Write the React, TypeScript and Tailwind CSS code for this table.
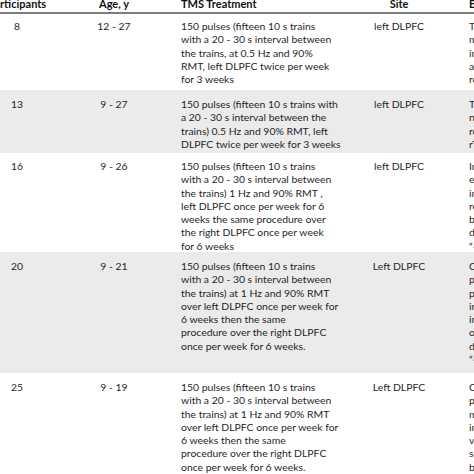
import React from 'react';

type Row = {
  n: string;
  age: string;
  tms: string[];
  site: string;
  effect: string[];
  shaded?: boolean;
  h: string;
  pt: string;
};

const rows: Row[] = [
  {
    n: '8',
    age: '12 - 27',
    tms: [
      '150 pulses (fifteen 10 s trains',
      'with a 20 - 30 s interval between',
      'the trains, at 0.5 Hz and 90%',
      'RMT, left DLPFC twice per week',
      'for 3 weeks',
    ],
    site: 'left DLPFC',
    effect: ['The YGTSS scores were', 'modestly reduced and', 'improvement was', 'associated with', 'reduced symptoms'],
    h: 'h-[76px]',
    pt: 'pt-[6px]',
  },
  {
    n: '13',
    age: '9 - 27',
    tms: [
      '150 pulses (fifteen 10 s trains with',
      'a 20 - 30 s interval between the',
      'trains) 0.5 Hz and 90%  RMT, left',
      'DLPFC twice per week for 3 weeks',
    ],
    site: 'left DLPFC',
    effect: ['The YGTSS scores were', 'not significantly', 'reduced after the', 'rTMS sessions'],
    shaded: true,
    h: 'h-[63px]',
    pt: 'pt-[8px]',
  },
  {
    n: '16',
    age: '9 - 26',
    tms: [
      '150 pulses (fifteen 10 s trains',
      'with a 20 - 30 s interval between',
      'the trains) 1 Hz and 90%  RMT ,',
      'left DLPFC once per week for 6',
      'weeks the same procedure over',
      'the right DLPFC once per week',
      'for 6 weeks',
    ],
    site: 'left DLPFC',
    effect: ['Improvement in tic', 'expression and', 'impulsivity was', 'reported; effects', 'became evident', 'during follow-up', '“~ 6 months”'],
    h: 'h-[99px]',
    pt: 'pt-[7px]',
  },
  {
    n: '20',
    age: '9 - 21',
    tms: [
      '150 pulses (fifteen 10 s trains',
      'with a 20 - 30 s interval between',
      'the trains) at 1 Hz and 90%  RMT',
      'over left DLPFC once per week for',
      '6 weeks then the same',
      'procedure over the right DLPFC',
      'once per week for 6 weeks.',
    ],
    site: 'Left DLPFC',
    effect: ['Clinical improvement in', 'patients with tics;', 'partial response', 'in obsessive', 'impulsive symptoms', 'observed after', 'discontinuation', '“~ 3 months”'],
    shaded: true,
    h: 'h-[121px]',
    pt: 'pt-[8px]',
  },
  {
    n: '25',
    age: '9 - 19',
    tms: [
      '150 pulses (fifteen 10 s trains',
      'with a 20 - 30 s interval between',
      'the trains) at 1 Hz and 90%  RMT',
      'over left DLPFC once per week for',
      '6 weeks then the same',
      'procedure over the right DLPFC',
      'once per week for 6 weeks.',
    ],
    site: 'Left DLPFC',
    effect: ['Clinical improvement in', 'patients; YGTSS', 'motor and vocal', 'improvement was', 'visible after the', 'sessions and', 'benefits were kept'],
    h: 'h-[120px]',
    pt: 'pt-[8px]',
  },
];

const cols = 'grid grid-cols-[80px_114px_169px_118px_200px]';

export default function App() {
  return (
    <div className="w-[474px] h-[474px] overflow-hidden bg-white text-[#1f1f1f] text-[10.4px] leading-[13.3px] font-['Lato',sans-serif]">
      <div className="ml-[-23px] w-[681px]">
        {/* Header */}
        <div className={`${cols} h-[16px] items-end pb-[4px] border-b-2 border-[#7d7d7d] font-bold text-[#111] text-[11px] leading-[12px] -mt-[2px]`}>
          <div className="text-center">Participants</div>
          <div className="text-center">Age, y</div>
          <div className="pl-[10px]">TMS Treatment</div>
          <div className="text-center">Site</div>
          <div className="pl-[11px]">Effects</div>
        </div>

        {rows.map((r) => (
          <div key={r.n} className={`${cols} ${r.h} ${r.pt} ${r.shaded ? 'bg-[#ebebeb]' : 'bg-white'}`}>
            <div className="text-center">{r.n}</div>
            <div className="text-center">{r.age}</div>
            <div className="pl-[10px] whitespace-nowrap">
              {r.tms.map((t, i) => (
                <div key={i}>{t}</div>
              ))}
            </div>
            <div className="text-center">{r.site}</div>
            <div className="pl-[11px] whitespace-nowrap">
              {r.effect.map((t, i) => (
                <div key={i}>{t}</div>
              ))}
            </div>
          </div>
        ))}
      </div>
    </div>
  );
}
